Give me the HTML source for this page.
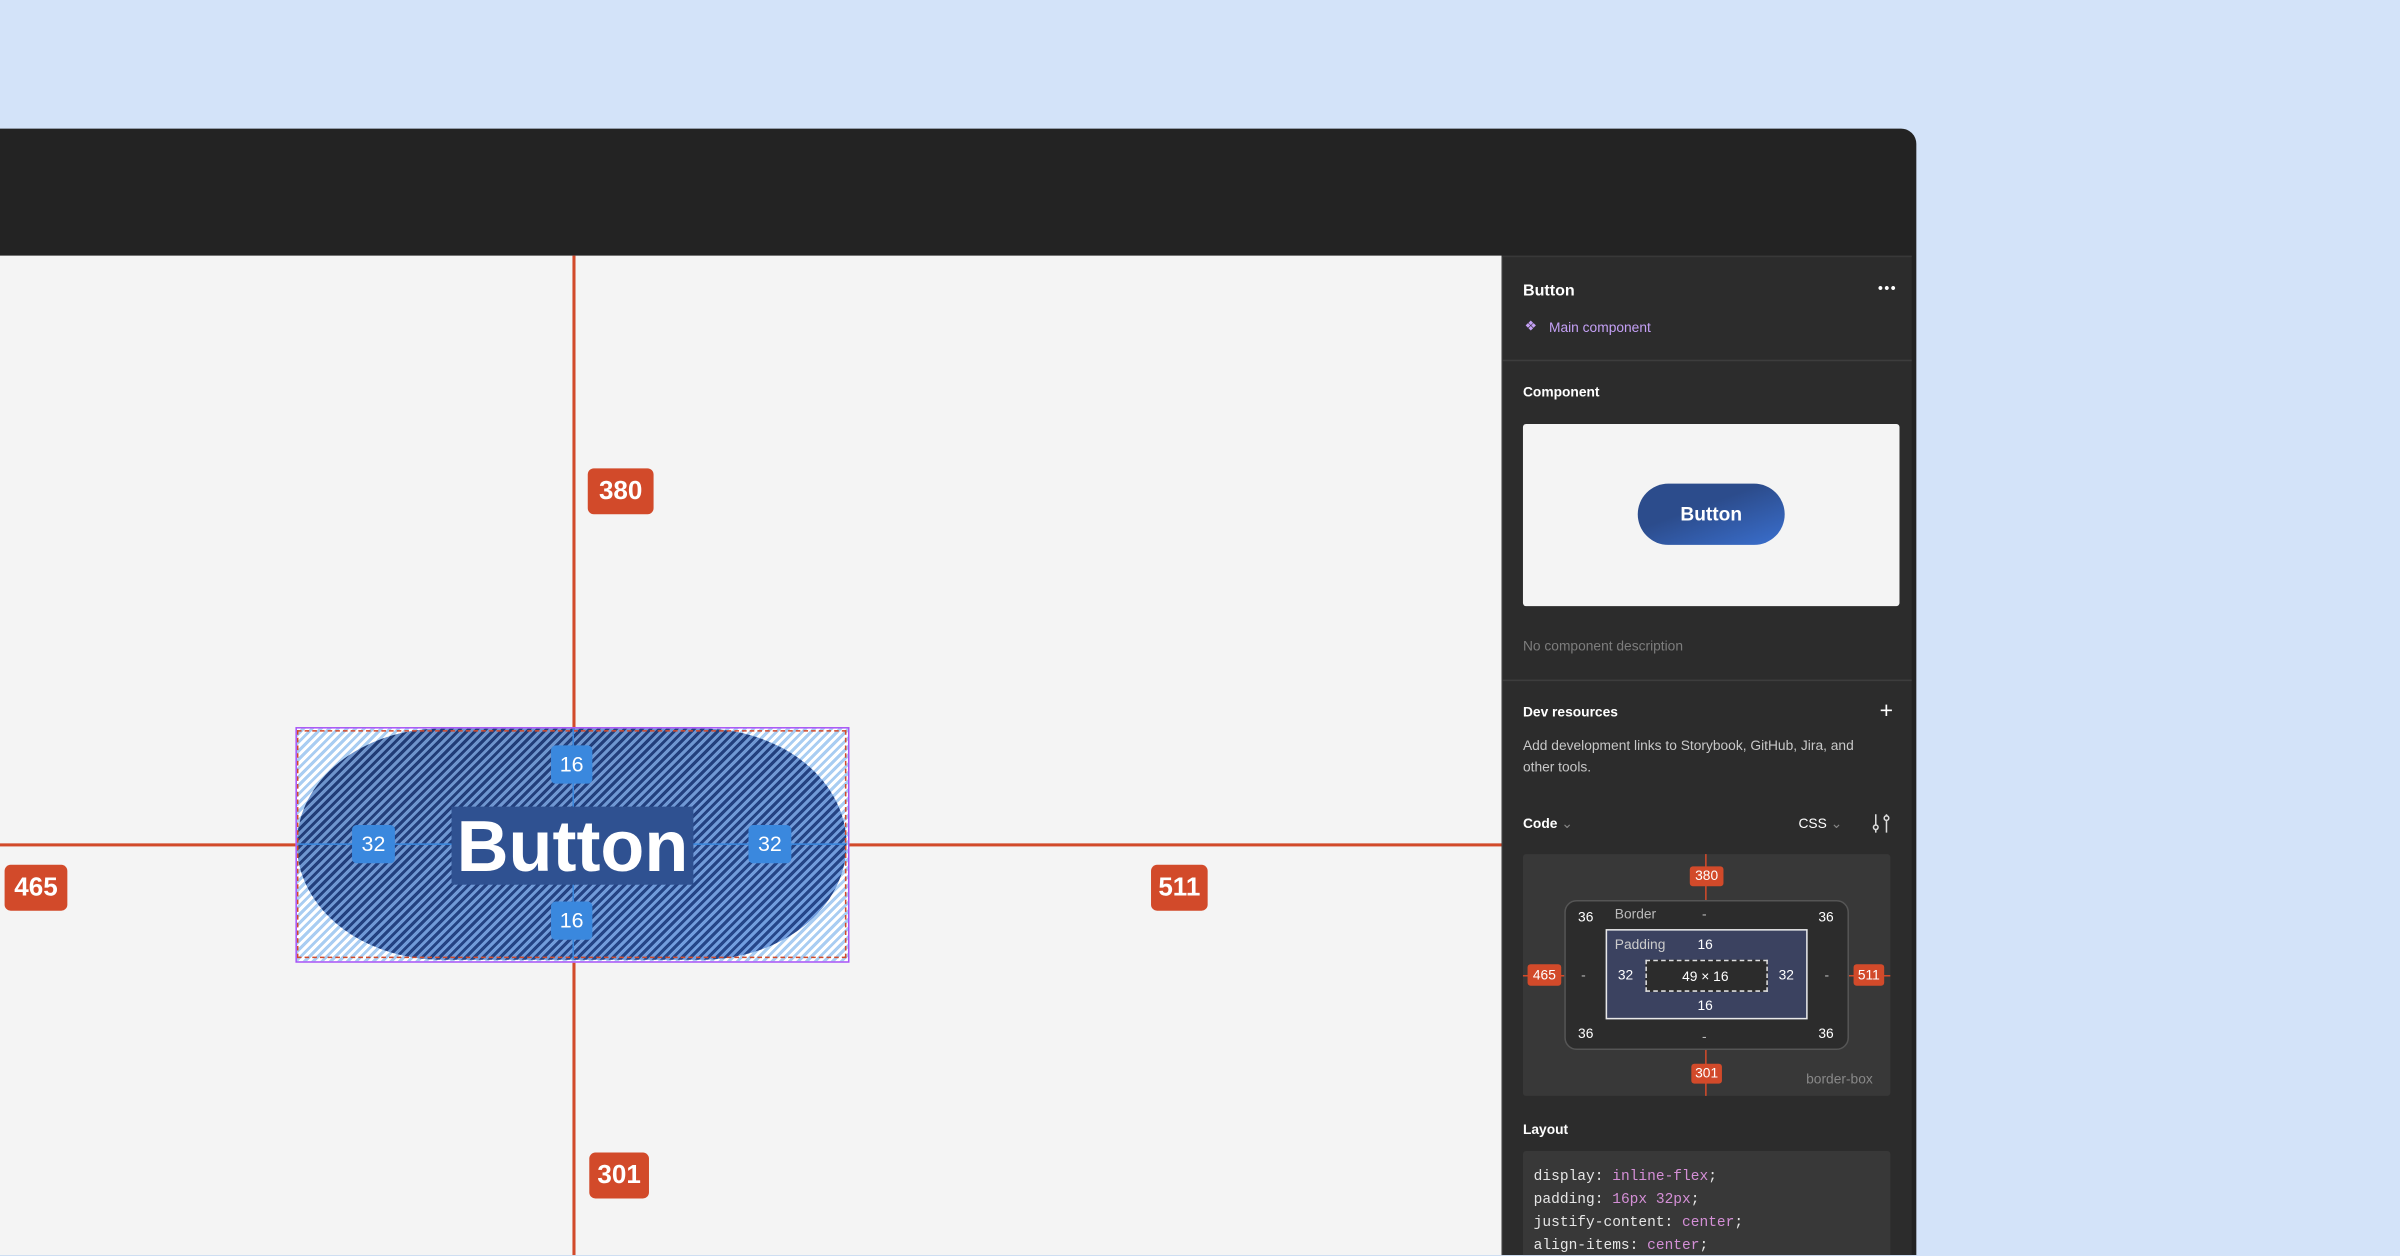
<!DOCTYPE html>
<html><head><meta charset="utf-8"><style>
*{margin:0;padding:0;box-sizing:border-box}
html,body{width:2400px;height:1256px;overflow:hidden;background:#d3e3f9}
#s{position:absolute;left:0;top:0;width:1568px;height:820px;transform:scale(1.530612);transform-origin:0 0;font-family:"Liberation Sans",sans-serif;overflow:hidden}
.a{position:absolute}
.win{left:0;top:84px;width:1252px;height:736px;background:#232323;border-top-right-radius:10px}
.canvas{left:0;top:167px;width:981px;height:653px;background:#f4f4f4}
.panel{left:981px;top:167px;width:268px;height:653px;background:#2c2c2c;border-left:1px solid #3a3a3a;border-top:1px solid #383838}
.rl{background:#d24a2a}
.rb{background:#d24a2a;color:#fff;font-weight:bold;font-size:17px;border-radius:4px;text-align:center;line-height:30px}
.bb{background:#3a88de;color:#fff;font-size:14px;border-radius:3px;text-align:center;line-height:25px}
.t{color:#fff;font-size:10px;white-space:nowrap}
.b{font-weight:bold}
.mono{font-family:"Liberation Mono",monospace;font-size:9.5px;color:#e6e6e6;white-space:pre}
.mono i{font-style:normal;color:#d48fd6}
.div{height:1px;background:#3d3d3d;left:981px;width:268px}
</style></head><body><div id="s">
<div class="a win"></div>
<div class="a canvas"></div>
<div class="a rl" style="left:374px;top:167px;width:2px;height:308px"></div>
<div class="a rl" style="left:374px;top:629px;width:2px;height:191px"></div>
<div class="a rl" style="left:0;top:551px;width:193px;height:2px"></div>
<div class="a rl" style="left:555px;top:551px;width:426px;height:2px"></div>
<div class="a rb" style="left:384px;top:306px;width:43px">380</div>
<div class="a rb" style="left:3px;top:565px;width:41px">465</div>
<div class="a rb" style="left:752px;top:565px;width:37px">511</div>
<div class="a rb" style="left:385px;top:753px;width:39px">301</div>
<div class="a" style="left:193px;top:475px;width:362px;height:154px;border:1.5px solid #a855f7;background:repeating-linear-gradient(-45deg,#fff 0 2px,#a9cdf2 2px 4px);overflow:hidden">
 <div class="a" style="left:0;top:0;width:359px;height:151px;border-radius:95px/76px;background:linear-gradient(160deg,#2e4f90,#3c6fcc 100%)"></div>
 <div class="a" style="left:0;top:0;width:359px;height:151px;border-radius:95px/76px;background:repeating-linear-gradient(-45deg,rgba(20,40,90,.55) 0 2px,rgba(160,200,245,.55) 2px 4px)"></div>
 <div class="a" style="left:0;top:1px;width:359px;height:149px;border:1px dashed #d24a2a"></div>
 <div class="a" style="left:1px;top:75px;width:357px;height:1px;background:#3a88de"></div>
 <div class="a" style="left:180px;top:0;width:1px;height:151px;background:#3a88de"></div>
 <div class="a" style="left:101px;top:51px;width:158px;height:51px;background:#2f5191"></div>
 <div class="a" style="left:101px;top:47px;width:158px;text-align:center;color:#fff;font-weight:bold;font-size:47px;line-height:60px">Button</div>
</div>
<div class="a bb" style="left:360px;top:487px;width:27px">16</div>
<div class="a bb" style="left:360px;top:589px;width:27px">16</div>
<div class="a bb" style="left:230px;top:539px;width:28px">32</div>
<div class="a bb" style="left:489px;top:539px;width:28px">32</div>
<div class="a panel"></div>
<div class="a t b" style="left:995px;top:184px;font-size:10.5px">Button</div>
<div class="a t b" style="left:1227px;top:183px;font-size:9px;letter-spacing:1px">•••</div>
<div class="a t" style="left:996px;top:208px;color:#c4a0f5;font-size:9px">❖</div>
<div class="a t" style="left:1012px;top:209px;color:#c4a0f5;font-size:9px">Main component</div>
<div class="a div" style="top:235px"></div>
<div class="a t b" style="left:995px;top:251px;font-size:9px">Component</div>
<div class="a" style="left:995px;top:277px;width:246px;height:119px;background:#f4f4f4;border-radius:2px"></div>
<div class="a" style="left:1070px;top:316px;width:96px;height:40px;border-radius:20px;background:linear-gradient(160deg,#2c4c8c 40%,#3a6fce);color:#fff;font-weight:bold;font-size:12.5px;text-align:center;line-height:40px">Button</div>
<div class="a t" style="left:995px;top:417px;color:#7d7d7d;font-size:9px">No component description</div>
<div class="a div" style="top:444px"></div>
<div class="a t b" style="left:995px;top:460px;font-size:9px">Dev resources</div>
<div class="a t" style="left:1228px;top:456px;font-size:15px;font-weight:300">+</div>
<div class="a t" style="left:995px;top:480px;color:#c8c8c8;font-size:9px;line-height:14px">Add development links to Storybook, GitHub, Jira, and<br>other tools.</div>
<div class="a t b" style="left:995px;top:533px;font-size:9px">Code <span style="color:#888;font-weight:normal">⌄</span></div>
<div class="a t" style="left:1175px;top:533px;font-size:9px">CSS <span style="color:#888">⌄</span></div>
<svg class="a" style="left:1222px;top:531px" width="14" height="14" viewBox="0 0 14 14" fill="none" stroke="#ddd" stroke-width="1"><path d="M3.5 1v7M3.5 11v2M10.5 1v1M10.5 5v8"/><circle cx="3.5" cy="9.5" r="1.5"/><circle cx="10.5" cy="3.5" r="1.5"/></svg>
<div class="a" style="left:995px;top:558px;width:240px;height:158px;background:#383838;border-radius:2px"></div>
<div class="a rl" style="left:1114px;top:558px;width:1px;height:30px"></div>
<div class="a rl" style="left:1114px;top:686px;width:1px;height:30px"></div>
<div class="a rl" style="left:995px;top:637px;width:27px;height:1px"></div>
<div class="a rl" style="left:1208px;top:637px;width:27px;height:1px"></div>
<div class="a" style="left:1022px;top:588px;width:186px;height:98px;background:#2c2c2c;border-radius:8px;border:1px solid #555"></div>
<div class="a" style="left:1049px;top:607px;width:132px;height:59px;background:#3b4260;border:1px solid #e8e8e8"></div>
<div class="a" style="left:1075px;top:627px;width:80px;height:21px;background:#2c2c2c;border:1px dashed #ddd"></div>
<div class="a rb" style="left:1104px;top:566px;width:22px;font-size:9px;line-height:13px;font-weight:normal;border-radius:2px">380</div>
<div class="a rb" style="left:1105px;top:695px;width:20px;font-size:9px;line-height:13px;font-weight:normal;border-radius:2px">301</div>
<div class="a rb" style="left:998px;top:630px;width:22px;font-size:9px;line-height:14px;font-weight:normal;border-radius:2px">465</div>
<div class="a rb" style="left:1211px;top:630px;width:20px;font-size:9px;line-height:14px;font-weight:normal;border-radius:2px">511</div>
<div class="a t" style="left:1031px;top:594px;font-size:9px">36</div>
<div class="a t" style="left:1188px;top:594px;font-size:9px">36</div>
<div class="a t" style="left:1031px;top:670px;font-size:9px">36</div>
<div class="a t" style="left:1188px;top:670px;font-size:9px">36</div>
<div class="a t" style="left:1055px;top:592px;font-size:9px;color:#bbb">Border</div>
<div class="a t" style="left:1112px;top:592px;font-size:9px;color:#bbb">-</div>
<div class="a t" style="left:1112px;top:672px;font-size:9px;color:#bbb">-</div>
<div class="a t" style="left:1033px;top:632px;font-size:9px;color:#bbb">-</div>
<div class="a t" style="left:1192px;top:632px;font-size:9px;color:#bbb">-</div>
<div class="a t" style="left:1055px;top:612px;font-size:9px;color:#ccc">Padding</div>
<div class="a t" style="left:1109px;top:612px;font-size:9px">16</div>
<div class="a t" style="left:1109px;top:652px;font-size:9px">16</div>
<div class="a t" style="left:1057px;top:632px;font-size:9px">32</div>
<div class="a t" style="left:1162px;top:632px;font-size:9px">32</div>
<div class="a t" style="left:1099px;top:633px;font-size:9px">49 × 16</div>
<div class="a t" style="left:1180px;top:700px;font-size:9px;color:#888">border-box</div>
<div class="a t b" style="left:995px;top:733px;font-size:9px">Layout</div>
<div class="a" style="left:995px;top:752px;width:240px;height:68px;background:#383838;border-radius:2px 2px 0 0"></div>
<div class="a mono" style="left:1002px;top:761px;line-height:15px">display: <i>inline-flex</i>;
padding: <i>16px 32px</i>;
justify-content: <i>center</i>;
align-items: <i>center</i>;</div>
</div></body></html>
